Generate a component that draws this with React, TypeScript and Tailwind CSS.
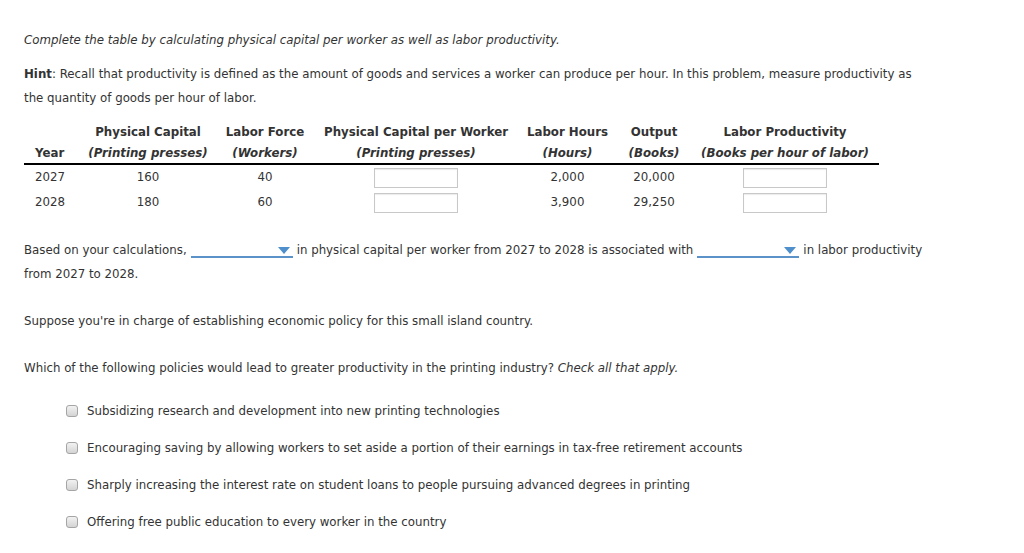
import React from "react";

const rows = [
  { year: "2027", capital: "160", labor: "40", hours: "2,000", output: "20,000" },
  { year: "2028", capital: "180", labor: "60", hours: "3,900", output: "29,250" },
];

const policies = [
  "Subsidizing research and development into new printing technologies",
  "Encouraging saving by allowing workers to set aside a portion of their earnings in tax-free retirement accounts",
  "Sharply increasing the interest rate on student loans to people pursuing advanced degrees in printing",
  "Offering free public education to every worker in the country",
];

function Blank() {
  return <div className="mx-auto h-[20px] w-[84px] border border-[#c8c8c8] bg-white shadow-[inset_0_1px_1px_rgba(0,0,0,0.08)]" />;
}

function Dropdown() {
  return (
    <span className="relative mx-[4px] inline-block h-[12px] w-[102px] border-b-2 border-[#5b93c9] align-[-4px]">
      <svg className="absolute right-[3px] top-[1px]" width="12" height="7" viewBox="0 0 12 7">
        <path d="M0 0 H12 L6 7 Z" fill="#4f8fcc" />
      </svg>
    </span>
  );
}

function Checkbox() {
  return (
    <span className="inline-block h-[12px] w-[12px] shrink-0 rounded-[3px] border border-[#a5a5a5] bg-gradient-to-b from-[#f2f2f2] to-[#d4d4d4]" />
  );
}

export default function App() {
  return (
    <div className="min-h-[553px] bg-white pl-[24px] pt-[28px] text-[11.8px] leading-[24px] text-[#333]" style={{ fontFamily: '"DejaVu Sans", Verdana, sans-serif' }}>
      <p className="italic">Complete the table by calculating physical capital per worker as well as labor productivity.</p>

      <p className="mt-[10px] w-[900px]">
        <b>Hint</b>: Recall that productivity is defined as the amount of goods and services a worker can produce per hour. In this problem, measure productivity as the quantity of goods per hour of labor.
      </p>

      <table className="mt-[12px] w-[855px] table-fixed border-collapse">
        <colgroup>
          <col className="w-[56px]" />
          <col className="w-[136px]" />
          <col className="w-[98px]" />
          <col className="w-[204px]" />
          <col className="w-[99px]" />
          <col className="w-[74px]" />
          <col className="w-[188px]" />
        </colgroup>
        <thead>
          <tr className="font-bold leading-[21px]">
            <th />
            <th className="text-center">Physical Capital</th>
            <th className="text-center">Labor Force</th>
            <th className="text-center">Physical Capital per Worker</th>
            <th className="text-center">Labor Hours</th>
            <th className="text-center">Output</th>
            <th className="text-center">Labor Productivity</th>
          </tr>
          <tr className="border-b-2 border-black font-bold leading-[20px]">
            <th className="pl-[11px] text-left">Year</th>
            <th className="text-center italic">(Printing presses)</th>
            <th className="text-center italic">(Workers)</th>
            <th className="text-center italic">(Printing presses)</th>
            <th className="text-center italic">(Hours)</th>
            <th className="text-center italic">(Books)</th>
            <th className="whitespace-nowrap text-center italic">(Books per hour of labor)</th>
          </tr>
        </thead>
        <tbody>
          {rows.map((r) => (
            <tr key={r.year} className="h-[25px] leading-[25px]">
              <td className="pl-[11px]">{r.year}</td>
              <td className="text-center">{r.capital}</td>
              <td className="text-center">{r.labor}</td>
              <td className="py-[2px]"><Blank /></td>
              <td className="text-center">{r.hours}</td>
              <td className="text-center">{r.output}</td>
              <td className="py-[2px]"><Blank /></td>
            </tr>
          ))}
        </tbody>
      </table>

      <p className="mt-[23px] w-[920px]">
        Based on your calculations,<Dropdown />in physical capital per worker from 2027 to 2028 is associated with<Dropdown />in labor productivity from 2027 to 2028.
      </p>

      <p className="mt-[23px]">Suppose you're in charge of establishing economic policy for this small island country.</p>

      <p className="mt-[23px]">
        Which of the following policies would lead to greater productivity in the printing industry? <i>Check all that apply.</i>
      </p>

      <ul className="mt-[19px] flex flex-col gap-[13px] pl-[42px]">
        {policies.map((p) => (
          <li key={p} className="flex h-[24px] items-center gap-[9px]">
            <Checkbox />
            <span>{p}</span>
          </li>
        ))}
      </ul>
    </div>
  );
}
